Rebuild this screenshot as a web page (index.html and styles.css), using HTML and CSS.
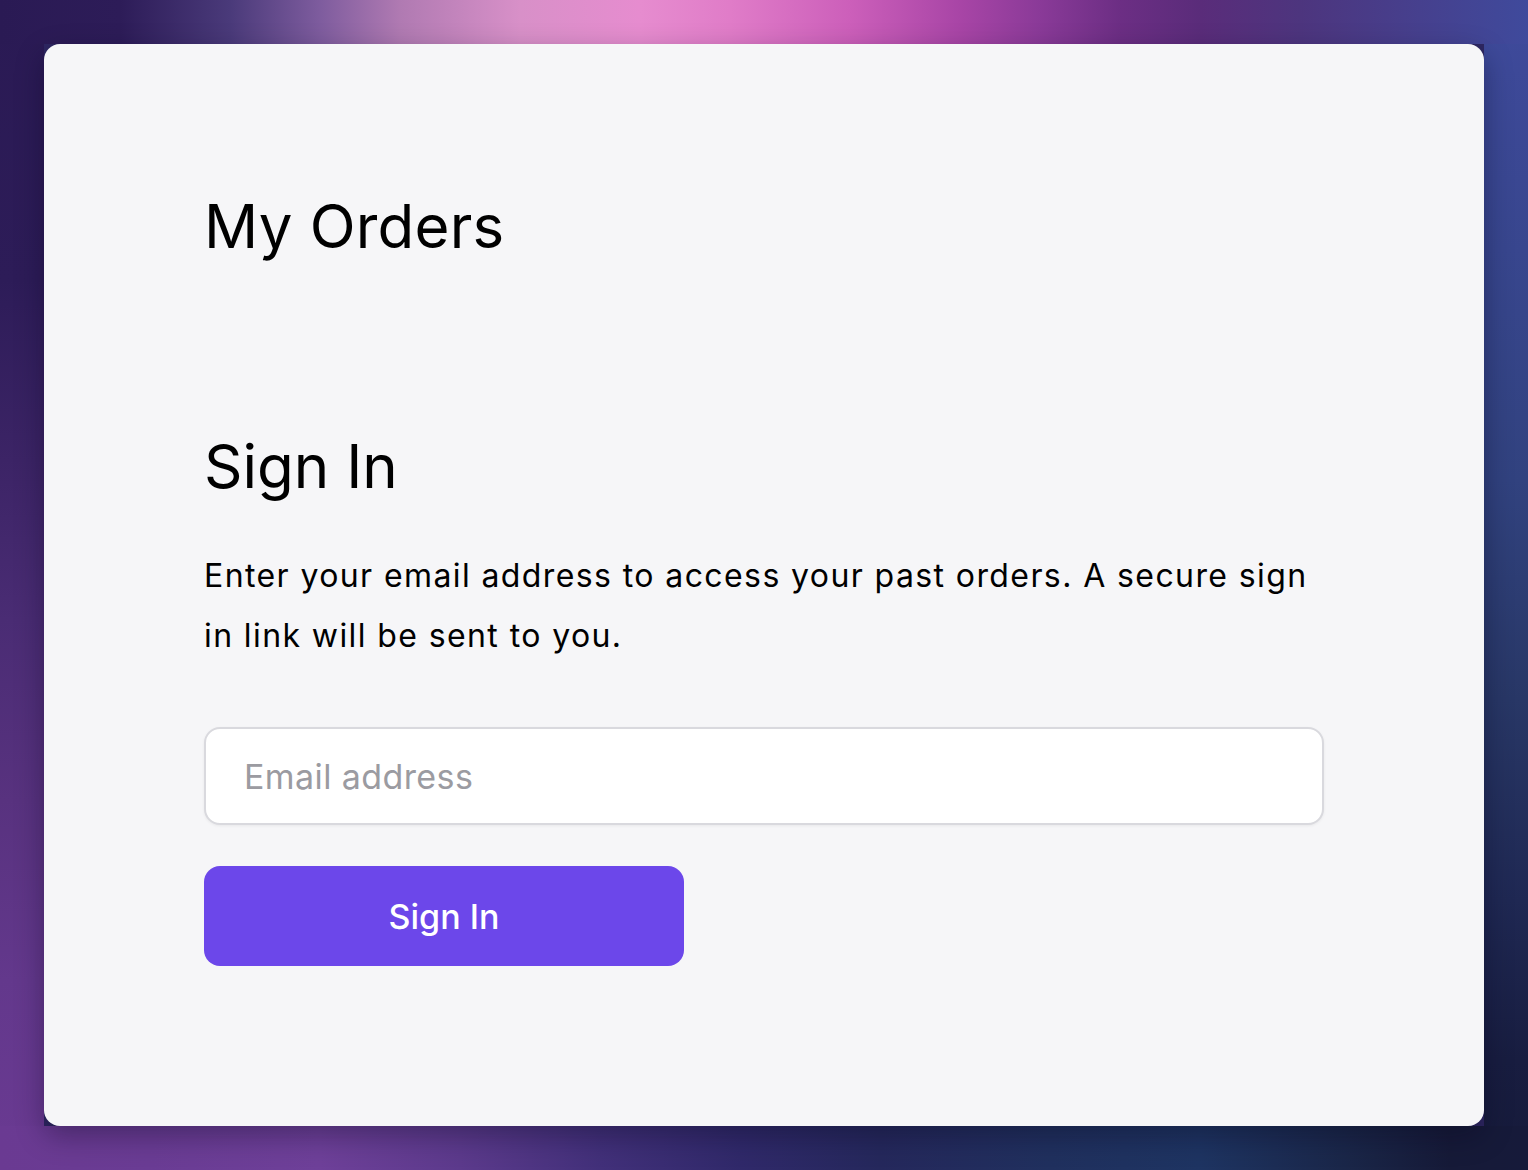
FILE: index.html
```html
<!DOCTYPE html>
<html lang="en">
<head>
<meta charset="utf-8">
<title>My Orders</title>
<link rel="stylesheet" href="styles.css">
</head>
<body>
  <main class="card">
    <h1 class="page-title">My Orders</h1>
    <section class="signin">
      <h2 class="signin-title">Sign In</h2>
      <p class="signin-text">Enter your email address to access your past orders. A secure sign in link will be sent to you.</p>
      <form class="signin-form">
        <input class="email-input" type="email" placeholder="Email address">
        <button class="signin-btn" type="button">Sign In</button>
      </form>
    </section>
  </main>
</body>
</html>
```

FILE: styles.css
```css
* { box-sizing: border-box; }

html, body { height: 100%; }

body {
  margin: 0;
  padding: 44px;
  font-family: Inter, "Noto Sans", "Liberation Sans", sans-serif;
  color: #000000;
  background-color: #2e2762;
  background-image:
    linear-gradient(to right, #2a1a54 0px, #2d1c58 120px, #4a3a7a 230px, #7e5c9e 320px, #b07ab2 400px, #d890c8 520px, #e68ccf 640px, #e07cc8 730px, #cc5fba 850px, #a845a6 960px, #8a3a98 1040px, #6c2e84 1120px, #5a2c7a 1200px, #4d357e 1300px, #46408e 1420px, #3f4a9c 1528px),
    linear-gradient(to right, #6a3a92 0px, #6a3c94 150px, #6e4099 320px, #5c3a8c 460px, #42307a 600px, #30296a 740px, #25285c 880px, #20305e 1050px, #1e3462 1200px, #1a2648 1350px, #161a38 1450px, #161a3a 1528px),
    linear-gradient(to bottom, #2a1a54 0px, #2d1c58 280px, #3c2466 460px, #4a2c74 620px, #58327f 800px, #63388c 980px, #6a3a92 1170px),
    linear-gradient(to bottom, #3f4a9c 0px, #38468e 250px, #31427f 480px, #283766 700px, #1f2853 900px, #181d40 1060px, #161a3a 1170px);
  background-size: 100% 44px, 100% 44px, 44px 100%, 44px 100%;
  background-position: top left, bottom left, top left, top right;
  background-repeat: no-repeat;
}

.card {
  height: 1082px;
  background: #f6f6f8;
  border-radius: 16px;
  padding: 146px 160px 0;
  box-shadow: 0 10px 28px rgba(10, 6, 30, 0.35);
}

.page-title {
  margin: 0;
  font-size: 60px;
  line-height: 72px;
  font-weight: 400;
  letter-spacing: 0.2px;
}

.signin {
  margin-top: 168px;
}

.signin-title {
  margin: 0;
  font-size: 60px;
  line-height: 72px;
  font-weight: 400;
}

.signin-text {
  margin: 44px 0 0;
  font-size: 32px;
  line-height: 60px;
  font-weight: 400;
  letter-spacing: 1.4px;
}

.signin-form {
  margin-top: 61px;
  display: flex;
  flex-direction: column;
  align-items: flex-start;
  gap: 41px;
}

.email-input {
  width: 100%;
  height: 98px;
  border: 2px solid #d9d9de;
  border-radius: 16px;
  background: #ffffff;
  padding: 0 38px;
  font-family: inherit;
  font-size: 34px;
  letter-spacing: 0.4px;
  color: #000000;
  outline: none;
  box-shadow: 0 1px 3px rgba(0, 0, 0, 0.06);
}

.email-input::placeholder {
  color: #9b9ba1;
}

.signin-btn {
  width: 480px;
  height: 100px;
  border: none;
  border-radius: 16px;
  background: #6c47ea;
  color: #ffffff;
  font-family: inherit;
  font-size: 34px;
  font-weight: 500;
  cursor: pointer;
}
```
